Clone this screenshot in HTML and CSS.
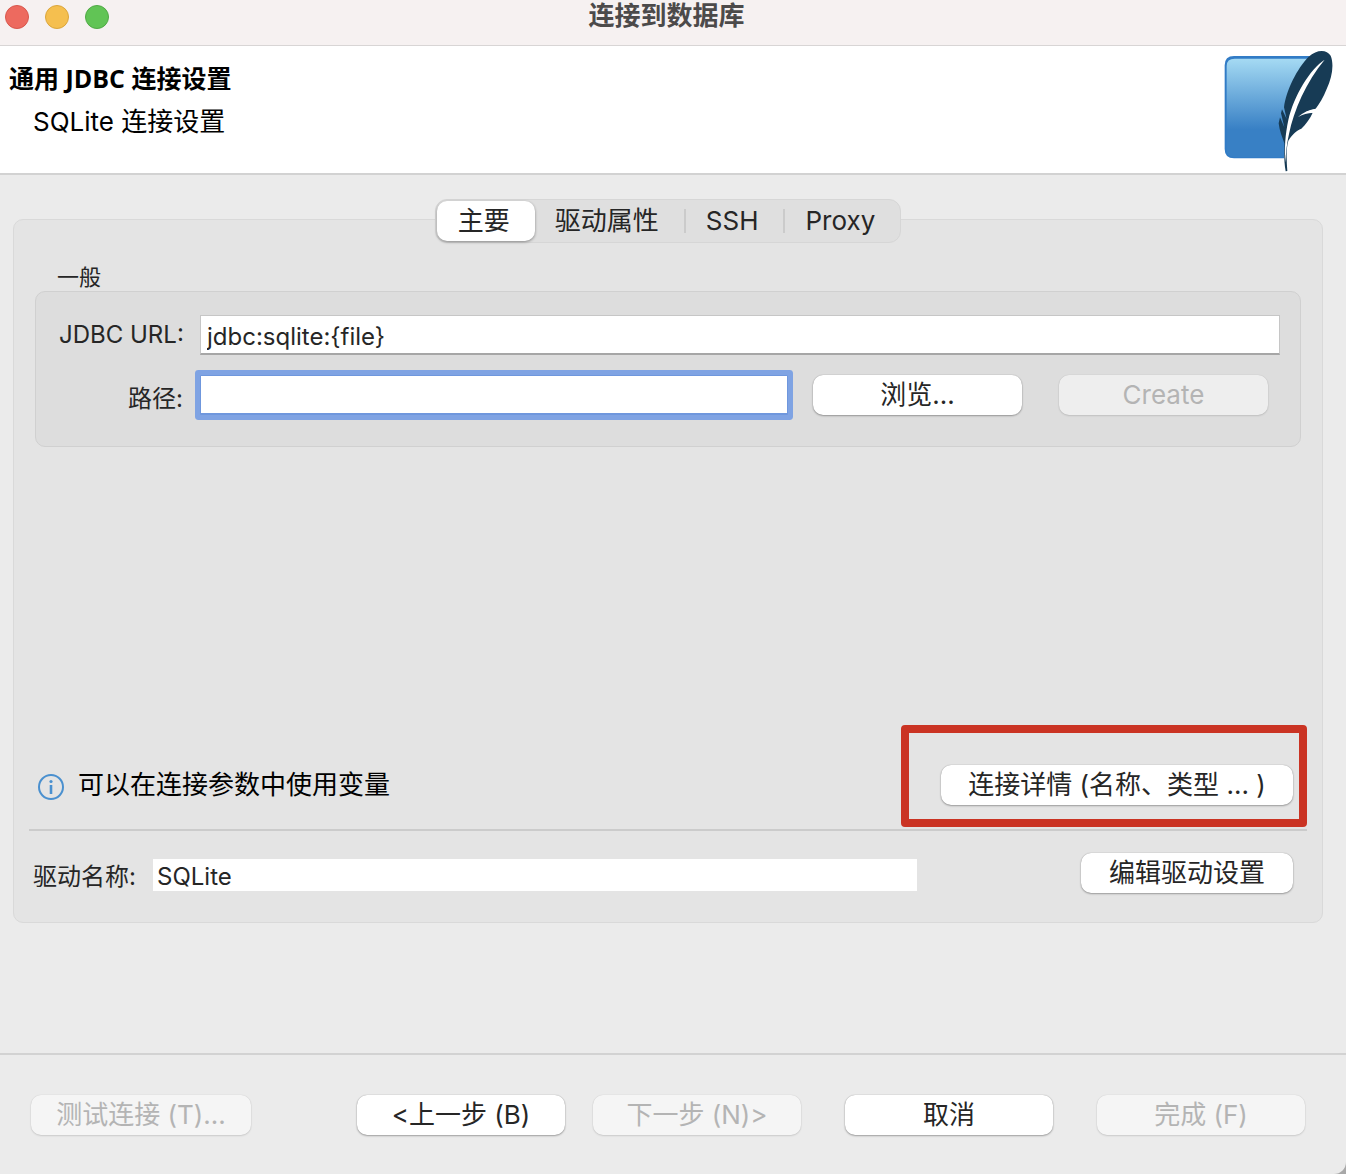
FILE: index.html
```html
<!DOCTYPE html>
<html lang="zh-CN">
<head>
  <meta charset="UTF-8" />
  <meta name="viewport" content="width=device-width, initial-scale=1" />
  <title>连接到数据库</title>
  <link rel="stylesheet" href="styles.css">
</head>
<body>
  <div class="window">

    <!-- Title bar -->
    <div class="titlebar">
      <div class="lights">
        <button type="button" class="light close" aria-label="关闭"></button>
        <button type="button" class="light minimize" aria-label="最小化"></button>
        <button type="button" class="light maximize" aria-label="缩放"></button>
      </div>
      <div class="title">连接到数据库</div>
    </div>

    <!-- Wizard header -->
    <header class="banner">
      <div>
        <h1>通用 JDBC 连接设置</h1>
        <p>SQLite 连接设置</p>
      </div>
      <svg class="logo" viewBox="72 28 327 366" aria-hidden="true">
        <defs>
          <linearGradient id="blue" x1="0" y1="0" x2="0" y2="1">
            <stop offset="0" stop-color="#a5daf3" />
            <stop offset="0.72" stop-color="#3880c5" />
            <stop offset="1" stop-color="#3880c5" />
          </linearGradient>
        </defs>
        <path d="M102 46H330L262 220L252 353H102Q74 353 74 325V74Q74 46 102 46Z" fill="#327cc6" />
        <path d="M104 54H322L258 220L251 349H104Q80 349 80 325V76Q80 54 104 54Z" fill="url(#blue)" />
        <path d="M252 200C258 150 292 82 326 48C350 26 380 25 392 45C403 72 396 112 380 145C370 170 358 190 347 204L318 213L338 216C330 234 318 250 304 264C290 268 275 284 265 300C257 330 260 362 262 391L257 392C250 350 254 325 253 308C247 290 238 270 236 248L240 230L253 260L243 218L246 206L260 235Z" fill="#173b55" />
        <path d="M374 57C330 84 281 168 265 238C256 280 252 325 257 366C257 338 261 305 267 280C281 210 319 122 374 57Z" fill="#fff" />
        <path d="M349 204C327 207 309 215 294 229C309 221 322 217 340 216Z" fill="#fff" />
      </svg>
    </header>

    <main>
      <div class="tabs" role="tablist">
        <button type="button" role="tab" class="tab active" aria-selected="true" aria-controls="main-panel">主要</button>
        <button type="button" role="tab" class="tab" aria-selected="false">驱动属性</button>
        <button type="button" role="tab" class="tab" aria-selected="false">SSH</button>
        <button type="button" role="tab" class="tab" aria-selected="false">Proxy</button>
      </div>

      <section class="panel" id="main-panel" role="tabpanel">
        <h2>一般</h2>
        <div class="group">
          <label for="url">JDBC URL:</label>
          <input type="text" id="url" value="jdbc:sqlite:{file}" />
          <label for="path" class="path-label">路径:</label>
          <div class="path-row">
            <input type="text" id="path" class="focused" />
            <button type="button" class="btn">浏览...</button>
            <button type="button" class="btn create" disabled>Create</button>
          </div>
        </div>

        <!-- Variables hint and connection details -->
        <div class="info-row">
          <div class="info">
            <svg class="info-icon" viewBox="0 0 26 26" aria-hidden="true">
              <circle cx="13" cy="13" r="12" fill="none" stroke="#4a90cf" stroke-width="2" />
              <circle cx="13" cy="7.5" r="1.6" fill="#4a90cf" />
              <path d="M13 11V20" stroke="#4a90cf" stroke-width="2.6" />
            </svg>
            <span>可以在连接参数中使用变量</span>
          </div>
          <div class="highlight">
            <button type="button" class="btn details">连接详情 (名称、类型 ... )</button>
          </div>
        </div>

        <div class="driver-row">
          <label for="driver">驱动名称:</label>
          <input type="text" id="driver" value="SQLite" readonly />
          <button type="button" class="btn edit">编辑驱动设置</button>
        </div>
      </section>
    </main>

    <footer>
      <button type="button" class="btn test" disabled>测试连接 (T)...</button>
      <div class="steps">
        <button type="button" class="btn">&lt;上一步 (B)</button>
        <button type="button" class="btn" disabled>下一步 (N)&gt;</button>
      </div>
      <button type="button" class="btn">取消</button>
      <button type="button" class="btn" disabled>完成 (F)</button>
    </footer>
  </div>
</body>
</html>
```
FILE: styles.css
```css
/* === Global Styles === */
* {
  box-sizing: border-box;
}

body {
  margin: 0;
  background: #a8a8a8;
  font-family: Inter, "Noto Sans CJK SC", sans-serif;
  font-size: 24px;
  line-height: 32px;
  color: #262626;
}

h1, h2, p {
  margin: 0;
}

button, input {
  font-family: inherit;
  color: inherit;
}

.window {
  min-height: 100vh;
  display: flex;
  flex-direction: column;
  background: #ebebeb;
  border-bottom-right-radius: 12px;
}

/* === Title bar === */
.titlebar {
  display: grid;
  grid-template-columns: 1fr auto 1fr;
  align-items: start;
  height: 46px;
  padding: 0 18px 0 5px;
  background: #f6f1f1;
  border-bottom: 1px solid #d8d5d5;
}

.lights {
  display: flex;
  gap: 16px;
  padding-top: 5px;
}

.light {
  width: 24px;
  height: 24px;
  padding: 0;
  border: 1px solid #d8574d;
  border-radius: 50%;
  background: #ed6a5f;
}

.minimize {
  background: #f5bf4f;
  border-color: #dba63c;
}

.maximize {
  background: #61c455;
  border-color: #50a945;
}

.title {
  font-size: 26px;
  font-weight: 600;
  color: #4c4a4a;
}

/* === Wizard header === */
.banner {
  display: flex;
  justify-content: space-between;
  align-items: flex-start;
  height: 129px;
  padding: 4px 13px 0 9px;
  background: #fff;
  border-bottom: 2px solid #d2d2d2;
  color: #000;
}

.banner h1 {
  padding-top: 12px;
  font-family: "Open Sans", "Noto Sans CJK SC", sans-serif;
  font-size: 25px;
  line-height: 32px;
}

.banner p {
  padding: 12px 0 0 24px;
  font-size: 26px;
}

.logo {
  width: 109px;
  height: 122px;
}

/* === Tabs === */
main {
  flex: 1;
  display: flex;
  flex-direction: column;
  padding: 24px 23px 130px 13px;
}

.tabs {
  display: flex;
  align-self: center;
  z-index: 1;
  height: 44px;
  padding: 1px;
  border: 1px solid #d6d6d6;
  border-radius: 12px;
  background: #dfdfdf;
}

.tab {
  position: relative;
  height: 40px;
  padding: 0 27px 0 20px;
  border: none;
  background: none;
  font-size: 26px;
  line-height: 36px;
}

.tab:last-child {
  padding-right: 24px;
}

.tab.active {
  padding: 0 25px 0 21px;
  border-radius: 10px;
  background: #fff;
  box-shadow: 0 1px 3px rgba(0, 0, 0, 0.4);
}

/* separator between inactive tabs */
.tab + .tab:not(:last-child)::after {
  content: "";
  position: absolute;
  top: 8px;
  right: 0;
  width: 2px;
  height: 24px;
  background: #cbcbcb;
}

/* === Panel === */
.panel {
  flex: 1;
  display: flex;
  flex-direction: column;
  margin-top: -24px;
  padding: 43px 15px 29px;
  border: 1px solid #d9d9d9;
  border-radius: 10px;
  background: #e4e4e4;
}

.panel h2 {
  padding-left: 28px;
  font-size: 22px;
  font-weight: 400;
  line-height: 28px;
}

.group {
  display: grid;
  grid-template-columns: 124px 1fr;
  gap: 20px 17px;
  align-items: center;
  margin: 0 6px;
  padding: 23px 20px 31px 23px;
  border: 1px solid #d0d0d0;
  border-radius: 10px;
  background: #ddd;
}

.group label {
  text-align: right;
  white-space: nowrap;
}

.group .path-label {
  padding-top: 8px;
}

.group input {
  width: 100%;
  height: 40px;
  padding: 4px 6px 0;
  border: 1px solid #c6c6c6;
  border-bottom: 2px solid #a6a6a6;
  background: #fff;
  font-size: 24px;
}

.path-row {
  display: flex;
  align-items: center;
  gap: 25px;
  padding-right: 12px;
}

.path-row input {
  flex: 1;
  min-width: 0;
  border-color: #6f97dd;
  outline: none;
}

.path-row .focused {
  box-shadow: 0 0 0 5px #7fa3e3;
  border-radius: 1px;
}

.path-row .create {
  margin-left: 12px;
}

/* === Buttons === */
.btn {
  flex: none;
  width: 209px;
  height: 40px;
  padding: 0;
  border: none;
  border-radius: 10px;
  background: #fff;
  box-shadow: 0 0 1px rgba(0, 0, 0, 0.35), 0 1px 2px rgba(0, 0, 0, 0.3);
  font-size: 26px;
  line-height: 36px;
  white-space: nowrap;
}

.btn:disabled {
  background: rgba(255, 255, 255, 0.5);
  box-shadow: 0 0 1px rgba(0, 0, 0, 0.2), 0 1px 2px rgba(0, 0, 0, 0.12);
  color: #b4b4b4;
}

/* === Info row === */
.info-row {
  display: flex;
  justify-content: space-between;
  align-items: center;
  margin-top: auto;
  padding-bottom: 2px;
  border-bottom: 2px solid #cbcbcb;
}

.info {
  display: flex;
  align-items: center;
  gap: 14px;
  padding: 18px 0 0 9px;
  font-size: 26px;
  color: #000;
}

.info-icon {
  width: 26px;
  height: 26px;
  margin-top: 4px;
}

.highlight {
  padding: 32px 6px 14px 32px;
  border: 8px solid #ca3323;
  border-radius: 4px;
}

.highlight .btn {
  display: block;
}

.btn.details {
  width: 352px;
}

/* === Driver row === */
.driver-row {
  display: flex;
  align-items: center;
  padding: 22px 14px 0 4px;
}

.driver-row label {
  width: 120px;
  padding-top: 8px;
}

.driver-row input {
  flex: 1;
  min-width: 0;
  height: 32px;
  margin: 4px 164px 0 0;
  padding: 2px 4px 0;
  border: none;
  background: #fff;
  font-size: 24px;
}

.btn.edit {
  width: 212px;
}

/* === Footer === */
footer {
  display: flex;
  gap: 44px;
  padding: 40px 41px 39px 31px;
  border-top: 2px solid #d2d2d2;
}

footer .btn {
  width: 208px;
}

footer .btn.test {
  width: 220px;
  margin-right: auto;
}

.steps {
  display: flex;
  gap: 28px;
}
```
